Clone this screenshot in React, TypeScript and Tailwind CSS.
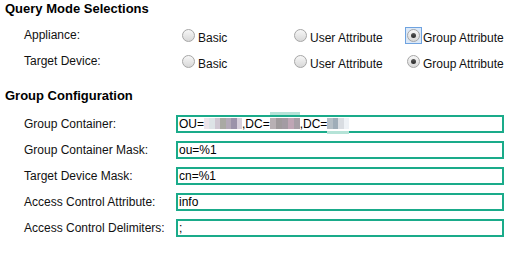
import React from "react";

type RadioProps = { checked?: boolean; focused?: boolean; label: string; width: string };

function Radio({ checked, focused, label, width }: RadioProps) {
  return (
    <div className={`flex shrink-0 items-start whitespace-nowrap pl-[5px] ${width}`}>
      <span
        className={`mt-[3px] flex h-[17px] w-[17px] shrink-0 items-center justify-center ${
          focused ? "border border-[#6fa3e0] bg-[#dbe8f7]" : "border border-transparent"
        }`}
      >
        <span className="flex h-[13px] w-[13px] items-center justify-center rounded-full border border-[#a6a6a6] bg-gradient-to-b from-[#f7f7f7] to-[#d8d8d8]">
          {checked && (
            <span className="h-[5px] w-[5px] rounded-full bg-gradient-to-b from-[#5a5a5a] to-[#2a2a2a]" />
          )}
        </span>
      </span>
      <span className="ml-[1px] mt-[6px] leading-[16px]">{label}</span>
    </div>
  );
}

// pixelated redaction blocks from the original capture
function Blur({ colors, w, streak }: { colors: string[]; w: string; streak?: "top" | "bottom" }) {
  return (
    <span className={`relative inline-flex h-[11px] align-[-1px] ${w}`}>
      {colors.map((c, i) => (
        <span key={i} className="h-full flex-1" style={{ background: c }} />
      ))}
      {streak === "top" && <span className="absolute -top-[6px] left-0 h-[3px] w-full bg-[#b5e3d7]" />}
      {streak === "bottom" && <span className="absolute -bottom-[5px] left-0 h-[3px] w-full bg-[#b5e3d7]" />}
    </span>
  );
}

const fields = [
  { label: "Group Container:", value: null },
  { label: "Group Container Mask:", value: "ou=%1" },
  { label: "Target Device Mask:", value: "cn=%1" },
  { label: "Access Control Attribute:", value: "info" },
  { label: "Access Control Delimiters:", value: ";" },
];

export default function App() {
  return (
    <div className="h-[260px] w-[518px] bg-white pl-[5px] text-[12px] text-[#111] font-['Liberation_Sans',Arial,sans-serif]">
      <h2 className="pt-[1px] text-[13px] font-bold leading-[16px] text-black">Query Mode Selections</h2>
      <div className="mt-[7px]">
        {[
          { label: "Appliance:", focused: true },
          { label: "Target Device:", focused: false },
        ].map((row) => (
          <div key={row.label} className="flex h-[26px] items-start">
            <div className="w-[170px] shrink-0 pl-[19px] pt-[3px] leading-[16px]">{row.label}</div>
            <Radio label="Basic" width="w-[112px]" />
            <Radio label="User Attribute" width="w-[113px]" />
            <Radio label="Group Attribute" width="w-[112px]" checked focused={row.focused} />
          </div>
        ))}
      </div>

      <h2 className="mt-[12px] text-[13px] font-bold leading-[16px] text-black">Group Configuration</h2>
      <div className="mt-[7px]">
        {fields.map((f) => (
          <div key={f.label} className="flex h-[26px] items-center">
            <div className="w-[171px] shrink-0 whitespace-nowrap pl-[19px] leading-[16px]">{f.label}</div>
            <div className="flex h-[18px] w-[328px] shrink-0 items-center border-2 border-[#1aab8a] pl-[1px] text-[12px] leading-[14px] text-black">
              {f.value === null ? (
                <span className="whitespace-nowrap">
                  OU=
                  <Blur w="w-[38px]" colors={["#ece4ea", "#dde3e6", "#cfc7d2", "#a9a9a3", "#b3a9b8", "#9c93aa", "#d8d0dc"]} />
                  ,DC=
                  <Blur w="w-[30px]" streak="top" colors={["#b8b0b4", "#9f9a9c", "#a39ba3", "#bfa6b5", "#a79fa6"]} />
                  ,DC=
                  <Blur w="w-[22px]" streak="bottom" colors={["#b5bfc6", "#9fadb8", "#d9dde2", "#eef2f6"]} />
                </span>
              ) : (
                f.value
              )}
            </div>
          </div>
        ))}
      </div>
    </div>
  );
}
